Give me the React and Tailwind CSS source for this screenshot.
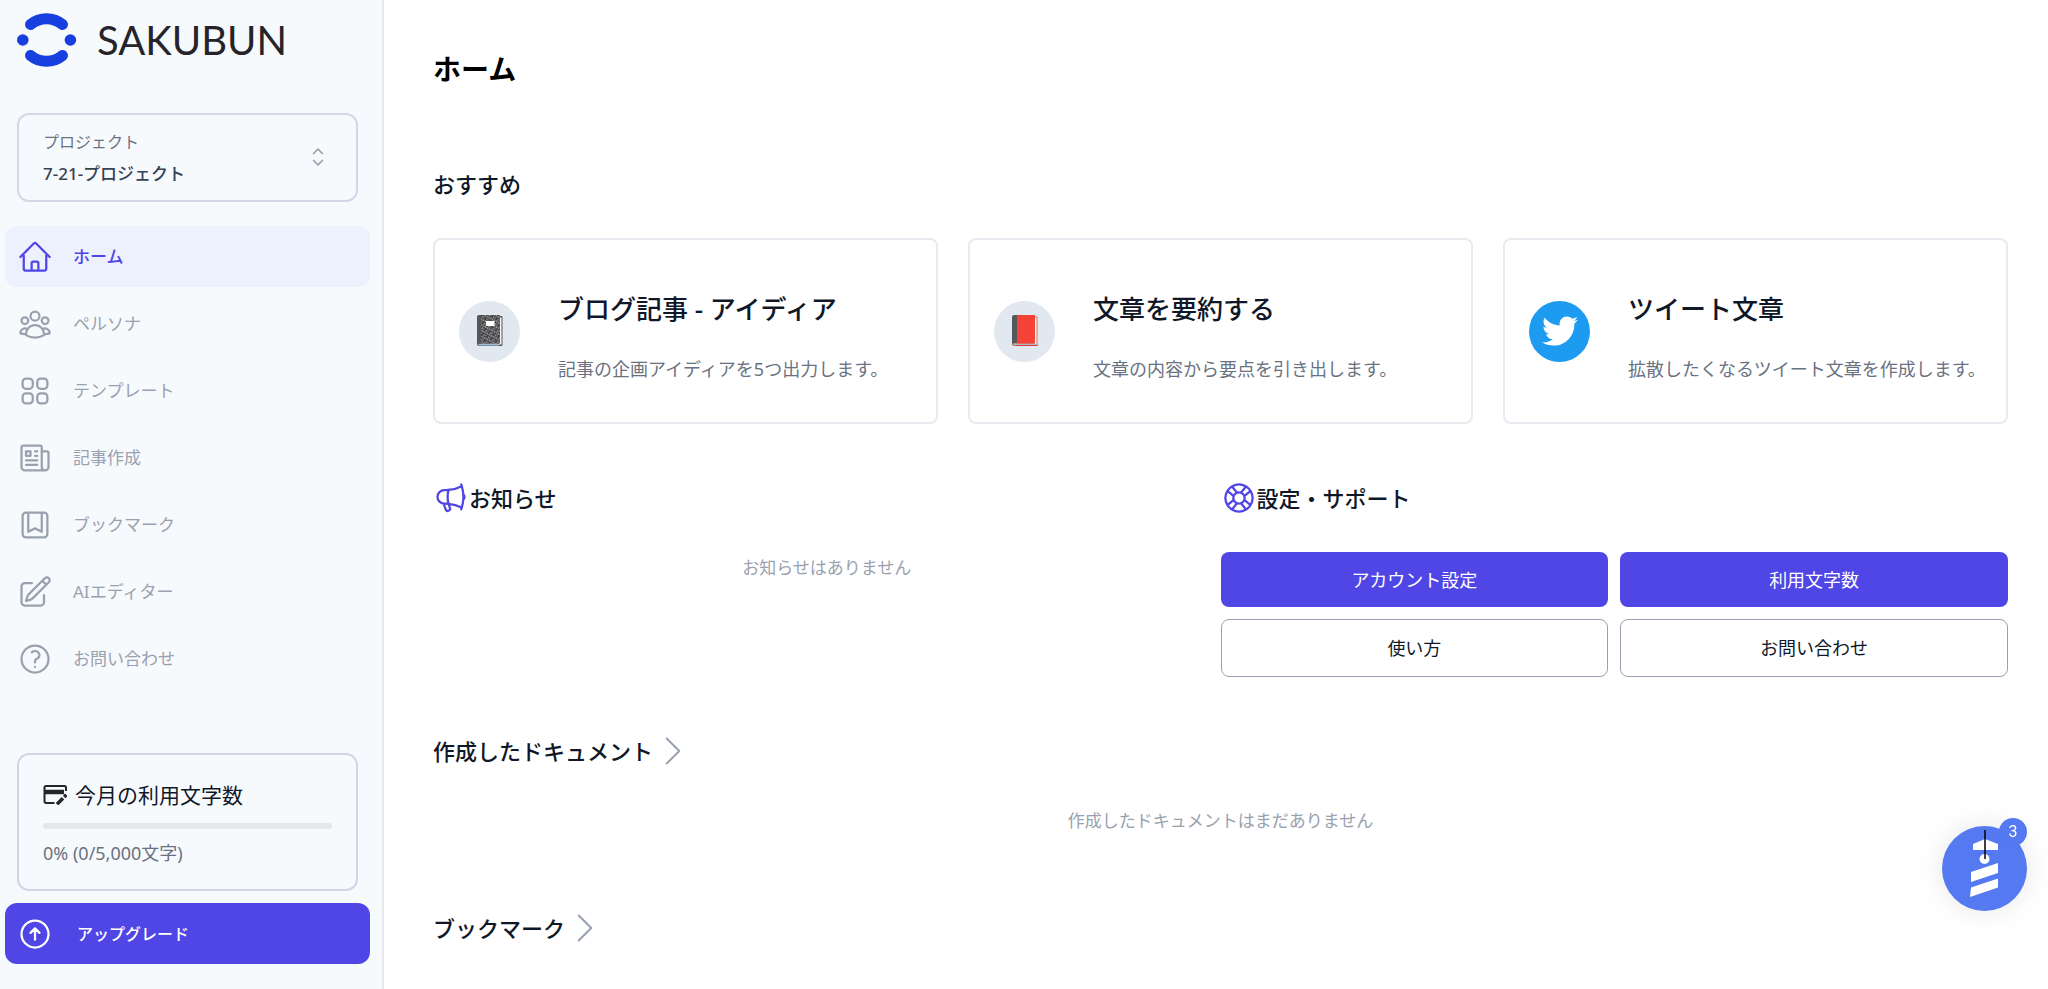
import React from 'react';
import {
  HiOutlineHome,
  HiOutlineUserGroup,
  HiOutlineSquares2X2,
  HiOutlineNewspaper,
  HiOutlineBookmarkSquare,
  HiOutlinePencilSquare,
  HiOutlineQuestionMarkCircle,
  HiOutlineArrowUpCircle,
  HiOutlineMegaphone,
  HiOutlineLifebuoy,
  HiChevronUpDown,
} from 'react-icons/hi2';
import { FaTwitter } from 'react-icons/fa';

const navItems = [
  { label: 'ホーム', icon: HiOutlineHome, active: true },
  { label: 'ペルソナ', icon: HiOutlineUserGroup },
  { label: 'テンプレート', icon: HiOutlineSquares2X2 },
  { label: '記事作成', icon: HiOutlineNewspaper },
  { label: 'ブックマーク', icon: HiOutlineBookmarkSquare },
  { label: 'AIエディター', icon: HiOutlinePencilSquare },
  { label: 'お問い合わせ', icon: HiOutlineQuestionMarkCircle },
];

const cards = [
  { title: 'ブログ記事 - アイディア', text: '記事の企画アイディアを5つ出力します。', icon: <NotebookIcon />, bg: 'bg-slate-200' },
  { title: '文章を要約する', text: '文章の内容から要点を引き出します。', icon: <RedBookIcon />, bg: 'bg-slate-200' },
  { title: 'ツイート文章', text: '拡散したくなるツイート文章を作成します。', icon: <FaTwitter className="size-9 text-white" />, bg: 'bg-[#1d9bf0]' },
];

function LogoMark() {
  return (
    <svg className="h-14 w-15 shrink-0" viewBox="0 0 60 56" fill="none" aria-hidden="true">
      <path d="M13.5 12.5a25 25 0 0 1 32 0M13.5 43.5a25 25 0 0 0 32 0" stroke="#173fdf" strokeWidth="11" strokeLinecap="round" />
      <circle cx="5.8" cy="28" r="5.8" fill="#173fdf" />
      <circle cx="53.4" cy="28" r="5.8" fill="#173fdf" />
    </svg>
  );
}

function NotebookIcon() {
  return (
    <svg className="h-8 w-7" viewBox="0 0 28 32" aria-hidden="true">
      <defs>
        <pattern id="marble" width="5" height="5" patternUnits="userSpaceOnUse" patternTransform="rotate(28)">
          <rect width="5" height="5" fill="#353537" />
          <path d="M0 .8h1.600v1h1M3.600 0v1.600h1.400M.8 3.400h1v1.600M2.800 3.700h1.400" stroke="#c4c4c6" strokeWidth=".8" fill="none" />
        </pattern>
      </defs>
      <path d="M3 1h22.500q1 0 1 1v28q0 1-1 1H3q-2 0-2-2V3q0-2 2-2z" fill="#555659" />
      <path d="M23 2.500h2.500v27H23z" fill="#f2f4f7" />
      <path d="M3 28.500h20v2H3q-1.500-1 0-2z" fill="#9fc0dc" />
      <path d="M5 0h19v28.500H5z" fill="url(#marble)" />
      <path d="M1 2q0-2 2-2h2v28.500H1z" fill="#55575a" />
      <path d="M10 6h8.500v5H10z" fill="#fff" />
    </svg>
  );
}

function RedBookIcon() {
  return (
    <svg className="h-8 w-7" viewBox="0 0 28 32" aria-hidden="true">
      <path d="M3 1.500h22.500q1 0 1 1V31H3q-2 0-2-2z" fill="#c7755a" />
      <path d="M23 2.500h2.500v27H23z" fill="#fbf3ea" />
      <path d="M2.500 28.500H24v1.500H3z" fill="#a9bbcf" />
      <path d="M5.500 0H24v28.500H5.500z" fill="#f44336" />
      <path d="M5.500 30h21v1h-21z" fill="#e53935" />
      <path d="M1 2q0-2 2-2h3v28H3q-1 0-2 1z" fill="#55595d" />
    </svg>
  );
}

function CardEditIcon() {
  return (
    <svg className="h-5 w-6 shrink-0" viewBox="0 0 24 20" fill="none" stroke="#26242b" aria-hidden="true">
      <path d="M11.500 18H3.200Q1.500 18 1.500 16.300V2.700Q1.500 1 3.200 1h18.100Q23 1 23 2.700V6" strokeWidth="2" />
      <path d="M1.500 7H21" strokeWidth="4.500" />
      <path d="M14 19.200l6-6M21.200 12l2.200-2.200" strokeWidth="3.600" />
    </svg>
  );
}

function ChevronRight() {
  return (
    <svg className="size-10 text-gray-400" viewBox="0 0 24 24" fill="none" stroke="currentColor" strokeWidth="1.2" strokeLinecap="round" strokeLinejoin="round" aria-hidden="true">
      <path d="M8.250 4.500l7.500 7.500-7.500 7.500" />
    </svg>
  );
}

function Sidebar() {
  return (
    <aside className="flex w-96 shrink-0 flex-col border-r-2 border-gray-200 bg-[#f7fafd] pt-3 pr-3 pl-[5px]">
      <a href="#home" className="ml-3 flex h-14 items-center gap-5">
        <LogoMark />
        <span className="font-[Lato] text-[40px] leading-none text-[#26242b]">SAKUBUN</span>
      </a>

      <div className="relative mt-[45px] mr-3 ml-3 flex h-[89px] flex-col justify-center rounded-xl border-2 border-[#d4d7e5] px-6">
        <label htmlFor="project" className="text-base leading-8 text-gray-500">プロジェクト</label>
        <select id="project" className="w-full appearance-none bg-transparent text-[17px] leading-8 font-medium text-gray-700">
          <option>7-21-プロジェクト</option>
        </select>
        <HiChevronUpDown className="pointer-events-none absolute top-7 right-6 size-7 text-gray-400" />
      </div>

      <nav className="mt-6 flex flex-col gap-1.5">
        {navItems.map(({ label, icon: Icon, active }) => (
          <a
            key={label}
            href="#nav"
            className={`flex h-[61px] items-center gap-5 rounded-xl px-3 text-[17px] ${
              active ? 'bg-[#edf1fe] font-medium text-[#4f46e5]' : 'text-gray-400'
            }`}
          >
            <Icon className="size-9" />
            {label}
          </a>
        ))}
      </nav>

      <div className="mt-16 mr-3 ml-3 rounded-xl border-2 border-[#d0d5e3] px-6 pt-6 pb-5">
        <div className="flex items-center gap-2 text-[21px] leading-8 text-gray-900">
          <CardEditIcon />
          今月の利用文字数
        </div>
        <div className="mt-3 h-1.5 rounded-full bg-gray-200" role="progressbar" aria-valuenow={0} />
        <p className="mt-2 text-lg leading-8 text-gray-500">0% (0/5,000文字)</p>
      </div>

      <button className="mt-3 flex h-[61px] items-center gap-6 rounded-xl bg-[#4f46e5] px-3 text-base font-medium text-white">
        <HiOutlineArrowUpCircle className="size-9" />
        アップグレード
      </button>
    </aside>
  );
}

function ChatButton() {
  return (
    <button aria-label="チャット" className="fixed right-[21px] bottom-[78px] size-[85px] rounded-full bg-[#5479f0] shadow-[0_0_28px_rgba(0,0,0,0.1)]">
      <svg className="size-full" viewBox="0 0 85 85" fill="#fff" aria-hidden="true">
        <path d="M31 18l12-5 13 5v6H31z" />
        <circle cx="42.500" cy="33" r="5" />
        <path d="M29 46l27-9v10l-27 9zM29 61.500l27-9v9l-28 9.500z" />
        <path d="M43 4v29" stroke="#000" strokeWidth="1.500" />
      </svg>
      <span className="absolute -top-2 right-0 flex size-7 items-center justify-center rounded-full bg-[#5479f0] font-[Roboto] text-base text-white">3</span>
    </button>
  );
}

function App() {
  return (
    <div className="flex min-h-screen bg-white font-['Noto_Sans','Noto_Sans_CJK_JP',sans-serif]">
      <Sidebar />
      <main className="min-w-0 flex-1 pt-[45px] pr-10 pl-[49px]">
        <h1 className="text-[28px] leading-[48px] font-bold text-black">ホーム</h1>

        <section className="mt-[71px]">
          <h2 className="text-[22px] leading-10 font-medium text-gray-900">おすすめ</h2>
          <div className="mt-[34px] grid grid-cols-3 gap-[30px]">
            {cards.map((card) => (
              <a key={card.title} href="#template" className="flex min-h-[186px] items-center gap-[38px] rounded-lg border-2 border-[#e9eaef] pr-3 pl-6">
                <span className={`flex size-[61px] shrink-0 items-center justify-center rounded-full ${card.bg}`}>{card.icon}</span>
                <span className="pt-4">
                  <span className="block text-[26px] leading-10 font-medium text-gray-900">{card.title}</span>
                  <span className="mt-5 block text-lg leading-10 text-gray-500">{card.text}</span>
                </span>
              </a>
            ))}
          </div>
        </section>

        <div className="mt-[54px] grid grid-cols-2">
          <section>
            <h2 className="flex items-center text-[22px] leading-10 font-medium text-gray-900">
              <HiOutlineMegaphone className="size-9 text-[#4f46e5]" />
              お知らせ
            </h2>
            <p className="mt-[34px] text-center text-[17px] leading-8 text-gray-400">お知らせはありません</p>
          </section>
          <section>
            <h2 className="flex items-center text-[22px] leading-10 font-medium text-gray-900">
              <HiOutlineLifebuoy className="size-9 text-[#4f46e5]" />
              設定・サポート
            </h2>
            <div className="mt-[34px] grid grid-cols-2 gap-3 text-lg">
              <button className="h-[55px] rounded-lg bg-[#4f46e5] text-white">アカウント設定</button>
              <button className="h-[55px] rounded-lg bg-[#4f46e5] text-white">利用文字数</button>
              <button className="h-[58px] rounded-lg border border-gray-400 text-gray-900">使い方</button>
              <button className="h-[58px] rounded-lg border border-gray-400 text-gray-900">お問い合わせ</button>
            </div>
          </section>
        </div>

        <section className="mt-[54px]">
          <h2 className="text-[22px] leading-10 font-medium text-gray-900">
            <a href="#documents" className="flex items-center">
              作成したドキュメント
              <ChevronRight />
            </a>
          </h2>
          <p className="mt-[34px] text-center text-[17px] leading-8 text-gray-400">作成したドキュメントはまだありません</p>
        </section>

        <section className="mt-[71px] pb-6">
          <h2 className="text-[22px] leading-10 font-medium text-gray-900">
            <a href="#bookmarks" className="flex items-center">
              ブックマーク
              <ChevronRight />
            </a>
          </h2>
        </section>
      </main>
      <ChatButton />
    </div>
  );
}

export default App;
